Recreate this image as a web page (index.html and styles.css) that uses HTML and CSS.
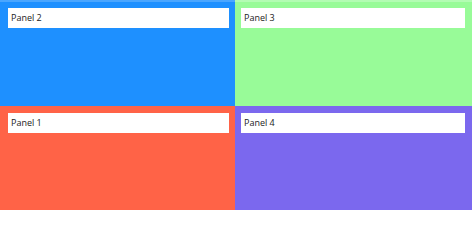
FILE: index.html
```html
<!DOCTYPE html>
<html>
<head>
<meta charset="utf-8">
<link rel="stylesheet" href="styles.css">
</head>
<body>
<div class="grid">
  <div class="panel left blue"><div class="box">Panel 2</div></div>
  <div class="panel right green"><div class="box">Panel 3</div></div>
  <div class="panel left orange"><div class="box">Panel 1</div></div>
  <div class="panel right purple"><div class="box">Panel 4</div></div>
</div>
</body>
</html>
```
FILE: styles.css
```css
html, body {
  margin: 0;
  padding: 0;
  background: #ffffff;
}
.grid {
  display: grid;
  grid-template-columns: 235px 237px;
  grid-template-rows: 106px 104px;
  width: 472px;
}
.panel {
  padding-top: 7px;
  box-sizing: border-box;
}
.left { padding-left: 8px; padding-right: 6px; }
.right { padding-left: 6px; padding-right: 7px; }
.blue { background: #1e90ff; border-top: 2px solid #4aa6ff; padding-top: 6px; }
.green { background: #98fb98; border-top: 2px solid #b3fcb3; padding-top: 6px; }
.orange { background: #ff6347; }
.purple { background: #7b68ee; }
.box {
  background: #ffffff;
  height: 20px;
  box-sizing: border-box;
  padding: 0 0 0 3px;
  font-family: "Open Sans", "Noto Sans", sans-serif;
  font-size: 9px;
  line-height: 20px;
  color: #222;
}
```
